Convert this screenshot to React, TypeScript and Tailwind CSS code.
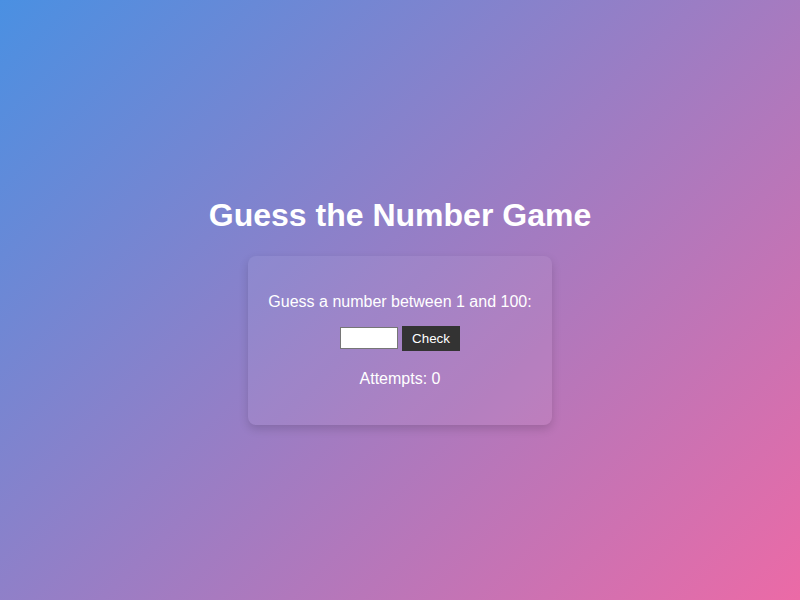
import { useState } from "react";

export default function App() {
  const [guess, setGuess] = useState("");
  const [attempts, setAttempts] = useState(0);

  return (
    <div className="min-h-screen flex flex-col items-center justify-center bg-[linear-gradient(135deg,#4a90e2,#ec6aa6)] text-white font-['Liberation_Sans',Arial,sans-serif]">
      <h1 className="text-[32px] leading-[37px] font-bold mt-[21px] mb-[22px]">Guess the Number Game</h1>

      <div className="flex flex-col items-center p-5 rounded-lg bg-white/[0.06] shadow-[0_4px_10px_rgba(0,0,0,0.15)]">
        <p className="mt-[17px] mb-[15px] text-base leading-[18px]">Guess a number between 1 and 100:</p>

        <div className="flex items-center gap-1">
          <input
            type="number"
            value={guess}
            onChange={(e) => setGuess(e.target.value)}
            className="w-[58px] h-[22px] bg-white border border-[#767676] text-black text-[13px] px-1 outline-none appearance-none"
          />
          <button
            onClick={() => setAttempts(attempts + 1)}
            className="h-[25px] px-[10px] bg-[#333] text-white text-[13.33px] leading-[15px]"
          >
            Check
          </button>
        </div>

        <p className="mt-[19px] mb-[17px] text-base leading-[18px]">Attempts: {attempts}</p>
      </div>
    </div>
  );
}
